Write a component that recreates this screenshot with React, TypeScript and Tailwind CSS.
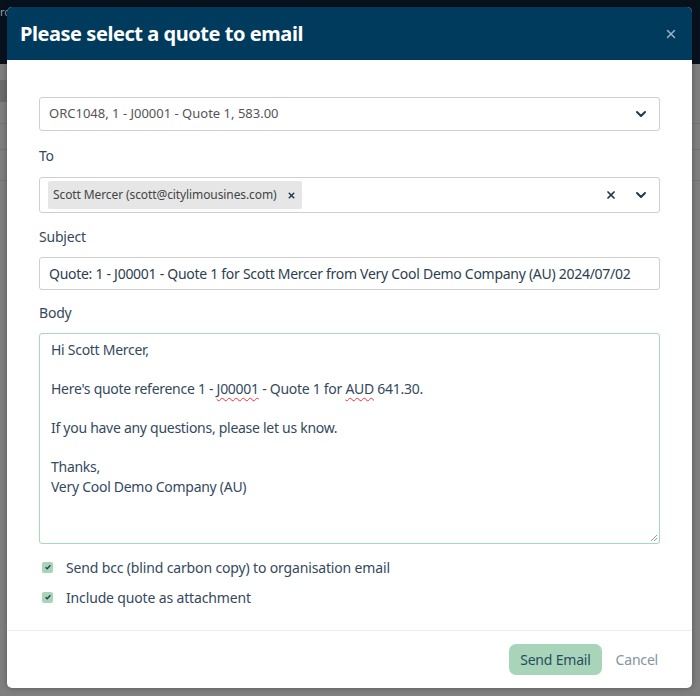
import { ChevronDown, X } from "lucide-react";

const font = { fontFamily: '"Noto Sans", "Open Sans", sans-serif' };

const Label = ({ children }: { children: React.ReactNode }) => (
  <p className="text-[14px] leading-[20px] tracking-[-0.2px] text-[#34495e]">{children}</p>
);

const CheckRow = ({ label }: { label: string }) => (
  <label className="flex items-center gap-[13px] h-[20px]">
    <span className="flex h-[11px] w-[11px] items-center justify-center rounded-[2px] bg-[#a8d5ba]">
      <svg viewBox="0 0 10 10" className="h-[8px] w-[8px]">
        <path d="M2 5.2 L4 7.2 L8 2.8" fill="none" stroke="#2c3e50" strokeWidth="1.8" />
      </svg>
    </span>
    <span className="text-[14px] tracking-[-0.15px] text-[#34495e]">{label}</span>
  </label>
);

export default function App() {
  return (
    <div style={font} className="relative h-[696px] w-[700px] overflow-hidden bg-[#7f7f7f]">
      {/* dimmed page underneath */}
      <div className="h-[64px] bg-[#08121d] pl-0 pt-[6px]">
        <span className="block text-[11px] leading-[12px] text-[#9aa3ab]">rc</span>
      </div>
      <div className="h-[16px]" />
      <div className="h-[22px] w-[8px] bg-[#6c6c6c]" />
      <div className="h-[22px] border-b border-[#737373]" />
      <div className="h-[26px] border-b border-[#737373]" />
      <div className="h-[31px] border-b border-[#737373]" />

      {/* modal */}
      <div className="absolute left-[7px] top-[7px] flex h-[681px] w-[685px] flex-col rounded-[5px] bg-white shadow-[0_0_6px_rgba(0,0,0,0.3)]">
        <div className="flex h-[53px] items-center justify-between rounded-t-[5px] bg-[#003b5e] pl-[13px] pr-[14px]">
          <h1 className="text-[20px] font-bold tracking-[-0.45px] text-white">Please select a quote to email</h1>
          <X className="h-[14px] w-[14px] text-[#9fb0c0]" strokeWidth={2.5} />
        </div>

        <div className="flex flex-1 flex-col px-[32px] pt-[37px]">
          <div className="flex h-[34px] items-center justify-between rounded-[3px] border border-[#cfcfcf] pl-[9px] pr-[10px]">
            <span className="text-[13px] text-[#555]">ORC1048, 1 - J00001 - Quote 1, 583.00</span>
            <ChevronDown className="h-[16px] w-[16px] text-[#1e3a52]" strokeWidth={3} />
          </div>

          <div className="mt-[15px]">
            <Label>To</Label>
          </div>
          <div className="mt-[11px] flex h-[36px] items-center justify-between rounded-[3px] border border-[#cfcfcf] pl-[8px] pr-[10px]">
            <span className="flex h-[28px] items-center gap-[10px] rounded-[2px] bg-[#e6e6e6] pl-[5px] pr-[6px] text-[12px] tracking-[-0.1px] text-[#444]">
              Scott Mercer (scott@citylimousines.com)
              <X className="h-[9px] w-[9px] text-[#1e3a52]" strokeWidth={4} />
            </span>
            <div className="flex items-center gap-[16px]">
              <X className="h-[12px] w-[12px] text-[#1e3a52]" strokeWidth={3.5} />
              <ChevronDown className="h-[16px] w-[16px] text-[#1e3a52]" strokeWidth={3} />
            </div>
          </div>

          <div className="mt-[14px]">
            <Label>Subject</Label>
          </div>
          <div className="mt-[10px] flex h-[33px] items-center rounded-[3px] border border-[#cfcfcf] pl-[9px]">
            <span className="text-[14px] tracking-[-0.28px] text-[#2c3e50]">
              Quote: 1 - J00001 - Quote 1 for Scott Mercer from Very Cool Demo Company (AU) 2024/07/02
            </span>
          </div>

          <div className="mt-[13px]">
            <Label>Body</Label>
          </div>
          <div className="relative mt-[10px] h-[211px] rounded-[3px] border border-[#a9d8b8] px-[11px] pt-[6px] text-[14px] leading-[19.5px] tracking-[-0.28px] text-[#34495e]">
            <p>Hi Scott Mercer,</p>
            <p>&nbsp;</p>
            <p>
              Here's quote reference 1 -{" "}
              <span className="underline decoration-wavy decoration-red-500 decoration-[1px] underline-offset-[3px]">J00001</span>{" "}
              - Quote 1 for{" "}
              <span className="underline decoration-wavy decoration-red-500 decoration-[1px] underline-offset-[3px]">AUD</span>{" "}
              641.30.
            </p>
            <p>&nbsp;</p>
            <p>If you have any questions, please let us know.</p>
            <p>&nbsp;</p>
            <p>Thanks,</p>
            <p>Very Cool Demo Company (AU)</p>
            <svg viewBox="0 0 8 8" className="absolute bottom-[1px] right-[1px] h-[8px] w-[8px]">
              <path d="M7 1 L1 7 M7 4 L4 7" stroke="#999" strokeWidth="1" />
            </svg>
          </div>

          <div className="mt-[13px] flex flex-col gap-[10px] pl-[3px]">
            <CheckRow label="Send bcc (blind carbon copy) to organisation email" />
            <CheckRow label="Include quote as attachment" />
          </div>
        </div>

        <div className="flex h-[58px] items-center justify-end gap-[14px] border-t border-[#ececec] pr-[34px]">
          <button className="h-[31px] rounded-[7px] bg-[#a8d5ba] px-[11px] text-[14px] tracking-[-0.2px] text-[#2c4a5e]">Send Email</button>
          <button className="text-[14px] tracking-[-0.2px] text-[#8493a3]">Cancel</button>
        </div>
      </div>
    </div>
  );
}
